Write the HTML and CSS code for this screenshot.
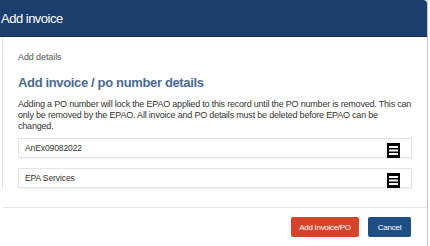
FILE: index.html
```html
<!DOCTYPE html>
<html>
<head>
<meta charset="utf-8">
<link rel="stylesheet" href="styles.css">
</head>
<body>
<div class="modal">
  <div class="modal-header">Add invoice</div>
  <div class="modal-body">
    <div class="subtitle">Add details</div>
    <h2 class="title">Add invoice / po number details</h2>
    <p class="info">Adding a PO number will lock the EPAO applied to this record until the PO number is removed. This can only be removed by the EPAO. All invoice and PO details must be deleted before EPAO can be changed.</p>
    <div class="field">
      <span class="field-text">AnEx09082022</span>
      <svg class="menu-icon" width="13" height="15" viewBox="0 0 13 15"><rect x="0" y="0" width="13" height="15" fill="#000"/><rect x="2" y="3" width="9" height="2" fill="#fff"/><rect x="2" y="6.5" width="9" height="2" fill="#fff"/><rect x="2" y="10" width="9" height="2" fill="#fff"/></svg>
    </div>
    <div class="field">
      <span class="field-text">EPA Services</span>
      <svg class="menu-icon" width="13" height="15" viewBox="0 0 13 15"><rect x="0" y="0" width="13" height="15" fill="#000"/><rect x="2" y="3" width="9" height="2" fill="#fff"/><rect x="2" y="6.5" width="9" height="2" fill="#fff"/><rect x="2" y="10" width="9" height="2" fill="#fff"/></svg>
    </div>
  </div>
  <div class="modal-footer">
    <button class="btn btn-red">Add Invoice/PO</button>
    <button class="btn btn-blue">Cancel</button>
  </div>
</div>
</body>
</html>
```
FILE: styles.css
```css
html, body {
  margin: 0;
  padding: 0;
  background: #fff;
}
body {
  font-family: "Liberation Sans", Arial, sans-serif;
  color: #333;
  width: 430px;
  height: 246px;
  overflow: hidden;
}
.modal {
  width: 427px;
  height: 246px;
  border-right: 1px solid #c8c8c8;
  display: flex;
  flex-direction: column;
  background: #fff;
}
.modal-header {
  height: 37px;
  background: #1c3e6e;
  color: #fff;
  font-size: 13px;
  letter-spacing: -0.5px;
  line-height: 37px;
  padding-left: 1px;
  border-top-right-radius: 4px;
  border-bottom: 1px solid #15294a;
  box-sizing: border-box;
}
.modal-body {
  padding: 13px 15px 0 15px;
  border-left: 1px solid #e0e0e0;
  margin-left: 2px;
}
.subtitle {
  font-size: 9px;
  letter-spacing: -0.1px;
  line-height: 14px;
  color: #555;
}
.title {
  margin: 10px 0 0 0;
  font-size: 13px;
  letter-spacing: -0.35px;
  line-height: 18px;
  font-weight: bold;
  color: #4a6b92;
}
.info {
  margin: 7px 0 0 0;
  font-size: 9px;
  letter-spacing: -0.2px;
  line-height: 11px;
  color: #333;
}
.field {
  margin-top: 6px;
  height: 20px;
  border: 1px solid #e4e4e4;
  box-sizing: border-box;
  display: flex;
  align-items: flex-start;
  justify-content: space-between;
  padding-left: 6px;
  padding-right: 11px;
  box-shadow: 0 1px 1px rgba(0,0,0,0.04);
}
.field + .field {
  margin-top: 10px;
}
.field-text {
  font-size: 8.5px;
  letter-spacing: -0.1px;
  line-height: 18px;
  color: #333;
}
.menu-icon {
  display: block;
  margin-top: 4px;
}
.modal-footer {
  margin-top: 19px;
  margin-left: 3px;
  border-top: 1px solid #e5e5e5;
  padding: 9px 16px 0 0;
  display: flex;
  justify-content: flex-end;
  gap: 9px;
}
.btn {
  height: 20px;
  border: none;
  border-radius: 2px;
  color: #fff;
  font-family: inherit;
  font-size: 8px;
  letter-spacing: -0.3px;
  padding: 0;
  cursor: pointer;
}
.btn-red {
  width: 68px;
  background: #d6432b;
}
.btn-blue {
  width: 43px;
  background: #1f4e85;
  letter-spacing: -0.2px;
}
```
